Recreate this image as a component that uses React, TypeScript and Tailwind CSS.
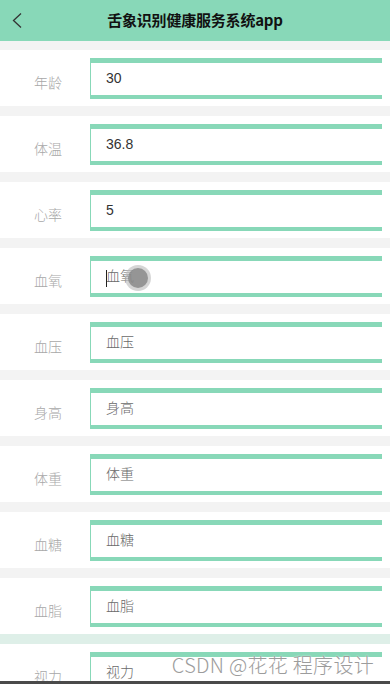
import React from 'react';

const FIELDS = [
  { label: '年龄', value: '30' },
  { label: '体温', value: '36.8' },
  { label: '心率', value: '5' },
  { label: '血氧', value: '', focus: true },
  { label: '血压', value: '' },
  { label: '身高', value: '' },
  { label: '体重', value: '' },
  { label: '血糖', value: '' },
  { label: '血脂', value: '' },
  { label: '视力', value: '' },
];

const font = { fontFamily: '"Noto Sans CJK SC", "Liberation Sans", sans-serif' };

export default function App() {
  return (
    <div className="relative w-[390px] h-[684px] overflow-hidden bg-[#f3f3f3]" style={font}>
      {/* Header */}
      <div className="relative flex items-center justify-center h-[41px] bg-[#88d8b8]">
        <svg className="absolute left-[11px] top-[12px]" width="12" height="17" viewBox="0 0 12 17" fill="none">
          <path d="M10 1.5 L2.5 8.5 L10 15.5" stroke="#333" strokeWidth="1.3" />
        </svg>
        <span className="text-[15px] font-bold text-[#111] tracking-[-0.2px]">舌象识别健康服务系统app</span>
      </div>

      {/* Form rows */}
      <div className="flex flex-col gap-[10px] pt-[9px]">
        {FIELDS.map((f) => (
          <div key={f.label} className="flex items-center h-[56px] bg-white">
            <span className="w-[90px] pl-[34px] pt-[8px] text-[14px] font-light text-[#a8a8a8]">{f.label}</span>
            <div className="relative flex items-center w-[292px] h-[41px] border-t-[5px] border-b-[4px] border-l border-[#88d8b8] border-r-[#e3f7f0] bg-white pl-[15px]">
              {f.focus && <span className="absolute left-[15px] top-[9px] w-px h-[17px] bg-[#222]" />}
              <input
                readOnly
                defaultValue={f.value}
                placeholder={f.label}
                className="w-full bg-transparent outline-none text-[14px] font-light text-[#333] placeholder:text-[#6a6a6a]"
                style={{ fontFamily: '"Liberation Sans", "Noto Sans CJK SC", sans-serif' }}
              />
              {f.focus && (
                <span className="absolute left-[37px] top-[7px] w-[20px] h-[20px] rounded-full bg-[#8a8a8a] ring-[3px] ring-[#bdbdbd]/70 opacity-90" />
              )}
            </div>
          </div>
        ))}
      </div>

      {/* overscroll tint between last rows */}
      <div className="absolute left-0 top-[634px] w-[390px] h-[10px] bg-[#deefe8]" />

      {/* watermark */}
      <span className="absolute right-[16px] top-[650px] text-[20px] font-light text-[#9c9c9c] tracking-[0.3px] [text-shadow:0_0_2px_#fff]">
        CSDN @花花 程序设计
      </span>

      {/* bottom bar */}
      <div className="absolute left-0 bottom-0 w-[390px] h-[3px] bg-[#4a4a4a]" />
    </div>
  );
}
